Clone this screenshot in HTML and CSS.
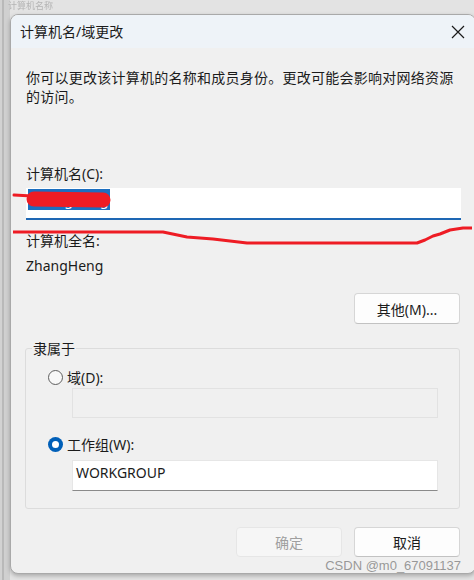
FILE: index.html
```html
<!DOCTYPE html>
<html lang="zh-CN">
<head>
<meta charset="utf-8">
<title>计算机名/域更改</title>
<link rel="stylesheet" href="styles.css">
</head>
<body>
<div class="backdrop"><span>计算机名称</span></div>
<div class="window">
  <div class="titlebar">
    <span class="title">计算机名/域更改</span>
    <svg class="close" width="14" height="14" viewBox="0 0 14 14"><path d="M1 1 L13 13 M13 1 L1 13" stroke="#1a1a1a" stroke-width="1.2" fill="none"/></svg>
  </div>
  <div class="content">
    <p class="desc">你可以更改该计算机的名称和成员身份。更改可能会影响对网络资源的访问。</p>
    <div class="label first">计算机名(C):</div>
    <div class="textbox focused"><span class="sel">ZhangHeng</span></div>
    <div class="label full">计算机全名:</div>
    <div class="value">ZhangHeng</div>
    <div class="row-right"><button class="btn other">其他(M)...</button></div>
    <fieldset class="group">
      <legend>隶属于</legend>
      <div class="radio-row first"><span class="radio"></span>域(D):</div>
      <div class="textbox disabled"></div>
      <div class="radio-row second"><span class="radio checked"></span>工作组(W):</div>
      <div class="textbox wg">WORKGROUP</div>
    </fieldset>
    <div class="actions">
      <button class="btn" disabled>确定</button>
      <button class="btn">取消</button>
    </div>
    <div class="watermark">CSDN @m0_67091137</div>
  </div>
</div>
<svg class="scribble" width="474" height="580" viewBox="0 0 474 580">
  <path d="M14 195 L32 196" stroke="#ee1c24" stroke-width="3" stroke-linecap="round" fill="none"/>
  <path d="M34 199 L103 200" stroke="#ee1c24" stroke-width="15" stroke-linecap="round" fill="none"/>
  <polyline points="13,232 163,232 187,237 213,239 247,243 417,243 425,240 433,236 440,234 450,230 463,228 472,228" stroke="#ee1c24" stroke-width="3" fill="none" stroke-linejoin="round"/>
</svg>
</body>
</html>
```
FILE: styles.css
```css
html, body {
  margin: 0;
  padding: 0;
}
body {
  width: 474px;
  height: 580px;
  overflow: hidden;
  position: relative;
  background: linear-gradient(to right, #d2d2d2 0 2px, #b9b9b9 2px 4px, #d0d0d0 4px 10px, #e3e3e3 10px);
  font-family: "Noto Sans", "Noto Sans CJK SC", sans-serif;
  font-size: 14px;
  line-height: 19px;
  color: #1b1b1b;
}
.backdrop {
  height: 14px;
  overflow: hidden;
  padding-left: 8px;
}
.backdrop span {
  display: block;
  font-size: 9px;
  line-height: 11px;
  color: #b4b4b4;
  filter: blur(0.5px);
}
.window {
  margin-left: 10px;
  width: 466px;
  height: 560px;
  box-sizing: border-box;
  border: 1px solid #a9a9a9;
  border-radius: 8px;
  background: #f0f0f0;
  box-shadow: 0 2px 4px rgba(0,0,0,0.25);
  overflow: hidden;
}
.titlebar {
  height: 33px;
  background: #eef3f8;
  display: flex;
  align-items: center;
  justify-content: space-between;
  padding: 0 10px 0 9px;
}
.title {
  font-size: 14px;
}
.close {
  display: block;
}
.content {
  padding: 20px 14px 0 15px;
}
.desc {
  margin: 0;
  letter-spacing: 0.25px;
}
.label.first {
  margin-top: 58px;
}
.textbox {
  box-sizing: border-box;
  background: #ffffff;
}
.textbox.focused {
  margin-top: 5px;
  height: 32px;
  border-bottom: 2px solid #1e67b4;
  padding: 1px 2px;
}
.sel {
  display: inline-block;
  background: #1c6fc0;
  color: #ffffff;
  padding: 1px 3px;
  width: 76px;
}
.label.full {
  margin-top: 11px;
}
.value {
  margin-top: 6px;
}
.row-right {
  margin-top: 18px;
  display: flex;
  justify-content: flex-end;
  padding-right: 1px;
}
.btn {
  width: 106px;
  height: 30px;
  box-sizing: border-box;
  background: #fdfdfd;
  border: 1px solid #d6d6d6;
  border-bottom-color: #c2c2c2;
  border-radius: 4px;
  font-family: inherit;
  font-size: 14px;
  color: #1b1b1b;
  padding: 0;
}
.btn.other {
  height: 31px;
}
.btn:disabled {
  background: #f6f6f6;
  border-color: #e6e6e6;
  color: #9f9f9f;
}
.group {
  margin: 15px 1px 0 -1px;
  padding: 0 0 17px 0;
  border: 1px solid #dcdcdc;
  border-radius: 3px;
  min-width: 0;
}
.group legend {
  margin-left: 6px;
  padding: 0 1px;
  line-height: 19px;
}
.radio-row {
  display: flex;
  align-items: center;
  margin-left: 22px;
  gap: 4px;
}
.radio-row.first {
  margin-top: 10px;
}
.radio-row.second {
  margin-top: 17px;
}
.radio {
  width: 15px;
  height: 15px;
  box-sizing: border-box;
  border-radius: 50%;
  border: 1px solid #5e5e5e;
  background: #f8f8f8;
  display: flex;
  align-items: center;
  justify-content: center;
}
.radio.checked {
  border: none;
  background: #005fb8;
}
.radio.checked::after {
  content: "";
  width: 7px;
  height: 7px;
  border-radius: 50%;
  background: #ffffff;
}
.textbox.disabled {
  margin: 1px 0 0 46px;
  width: 366px;
  height: 30px;
  background: #f0f0f0;
  border: 1px solid #e2e2e2;
}
.textbox.wg {
  margin: 6px 0 0 46px;
  width: 366px;
  height: 31px;
  border: 1px solid #e6e6e6;
  border-bottom-color: #8a8a8a;
  padding: 2px 0 0 3px;
}
.actions {
  margin-top: 18px;
  display: flex;
  justify-content: flex-end;
  gap: 12px;
  padding-right: 1px;
}
.watermark {
  margin-top: 1px;
  text-align: right;
  font-family: "Liberation Sans", Arial, sans-serif;
  font-size: 13px;
  line-height: 16px;
  color: rgba(135,135,135,0.85);
  padding-right: 0;
}
.scribble {
  position: absolute;
  left: 0;
  top: 0;
  pointer-events: none;
}
```
